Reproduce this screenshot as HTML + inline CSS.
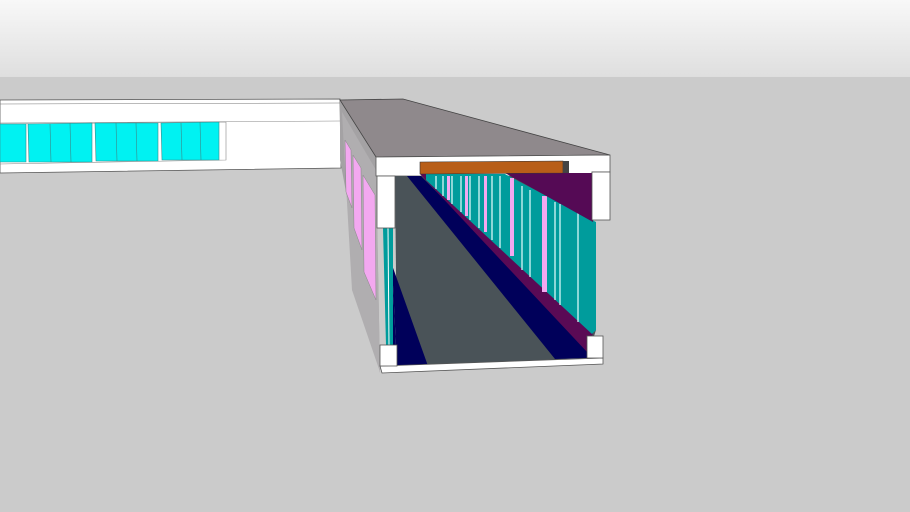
<!DOCTYPE html>
<html><head><style>
html,body{margin:0;padding:0;width:910px;height:512px;overflow:hidden;}
svg{display:block}
</style></head><body>
<svg width="910" height="512" viewBox="0 0 910 512" xmlns="http://www.w3.org/2000/svg">
<defs>
<linearGradient id="sky" x1="0" y1="0" x2="0" y2="1">
<stop offset="0" stop-color="#f8f8f8"/><stop offset="1" stop-color="#dedede"/>
</linearGradient>
</defs>
<rect x="0" y="0" width="910" height="78" fill="url(#sky)"/>
<rect x="0" y="77" width="910" height="435" fill="#cbcbcb"/>

<!-- left building -->
<polygon points="0,100 340,99 341,168 0,173" fill="#ffffff" stroke="#555" stroke-width="0.8"/>
<line x1="0" y1="104" x2="340" y2="103" stroke="#777" stroke-width="0.6"/>
<line x1="0" y1="123" x2="340" y2="121" stroke="#888" stroke-width="0.6"/>
<polygon points="0,124 226,122 226,160 0,164" fill="none" stroke="#888" stroke-width="0.6"/>
<g fill="#00f2f2" stroke="#3a8a8a" stroke-width="0.6">
<polygon points="0,124 26,124 26,162 0,162"/>
<polygon points="28,124 92,123 92,162 29,162"/>
<polygon points="95,123 158,123 158,161 96,161"/>
<polygon points="161,123 219,122 219,160 162,160"/>
</g>
<g stroke="#3a8a8a" stroke-width="0.6">
<line x1="50" y1="124" x2="51" y2="162"/><line x1="70" y1="123" x2="71" y2="162"/>
<line x1="116" y1="123" x2="117" y2="161"/><line x1="136" y1="123" x2="137" y2="161"/>
<line x1="181" y1="123" x2="182" y2="160"/><line x1="200" y1="122" x2="201" y2="160"/>
</g>

<!-- bridge left outer side -->
<polygon points="340,100 376,156 380,373 340,160" fill="#a4a2a4"/>
<polygon points="342,112 376,170 380,372 352,290 344,150" fill="#b0aeb0"/>
<g fill="#f3a8f0" stroke="#888" stroke-width="0.5">
<polygon points="345,140 351,150 352,208 346,192"/>
<polygon points="353,155 361,168 362,250 354,228"/>
<polygon points="363,175 375,195 376,300 364,272"/>
</g>
<!-- roof top -->
<polygon points="340,100 403,99 610,155 376,157" fill="#8f898c" stroke="#444" stroke-width="0.8"/>
<!-- roof front face -->
<polygon points="376,157 610,155 610,172 592,172 592,176 376,176" fill="#ffffff" stroke="#555" stroke-width="0.8"/>

<!-- interior -->
<polygon points="395,176 592,176 596,330 587,358 397,367" fill="#4a5358"/>
<polygon points="392,265 428,366 397,367" fill="#00005a"/>
<polygon points="393,228 392,265 397,367 390,340" fill="#00005a"/>
<polygon points="407,176 421,176 588,345 587,358 555,359" fill="#00005a"/>
<!-- purple curb -->
<polygon points="420,174 426,174 594,330 587,352" fill="#5a0a55"/>
<!-- right wall teal -->
<polygon points="426,174 505,174 592,220 596,222 596,330 592,334 426,180" fill="#009c9c"/>
<g stroke="#e8ffff" stroke-width="1.2">
<line x1="436" y1="176" x2="436" y2="189"/><line x1="443" y1="176" x2="443" y2="196"/>
<line x1="452" y1="176" x2="452" y2="204"/><line x1="461" y1="176" x2="461" y2="212"/>
<line x1="470" y1="176" x2="470" y2="220"/><line x1="479" y1="176" x2="479" y2="228"/>
<line x1="492" y1="176" x2="492" y2="240"/><line x1="500" y1="176" x2="500" y2="248"/>
<line x1="522" y1="186" x2="522" y2="270"/><line x1="530" y1="190" x2="530" y2="277"/>
<line x1="555" y1="202" x2="555" y2="300"/><line x1="560" y1="204" x2="560" y2="305"/>
<line x1="578" y1="212" x2="578" y2="322"/>
</g>
<g fill="#f3a8f0">
<rect x="447" y="176" width="3" height="24"/><rect x="465" y="176" width="3" height="40"/>
<rect x="484" y="176" width="3" height="56"/>
<rect x="510" y="178" width="4" height="78"/><rect x="542" y="196" width="5" height="96"/>
</g>
<!-- purple triangle -->
<polygon points="505,173 593,173 593,222" fill="#550a55"/>
<!-- orange beam -->
<polygon points="420,162 563,161 563,173 420,174" fill="#b85e18" stroke="#333" stroke-width="0.6"/>
<rect x="563" y="161" width="6" height="12" fill="#444"/>
<!-- left interior wall teal -->
<polygon points="383,228 393,228 393,345 386,345" fill="#009c9c"/>
<line x1="388" y1="228" x2="389" y2="345" stroke="#fff" stroke-width="1"/>
<!-- columns -->
<rect x="377" y="176" width="18" height="52" fill="#fff" stroke="#555" stroke-width="0.8"/>
<rect x="592" y="172" width="18" height="48" fill="#fff" stroke="#555" stroke-width="0.8"/>
<!-- bottom slab -->
<polygon points="380,366 603,358 603,364 382,373" fill="#fff" stroke="#555" stroke-width="0.8"/>
<rect x="380" y="345" width="17" height="21" fill="#fff" stroke="#555" stroke-width="0.8"/>
<rect x="587" y="336" width="16" height="22" fill="#fff" stroke="#555" stroke-width="0.8"/>
</svg>
</body></html>
